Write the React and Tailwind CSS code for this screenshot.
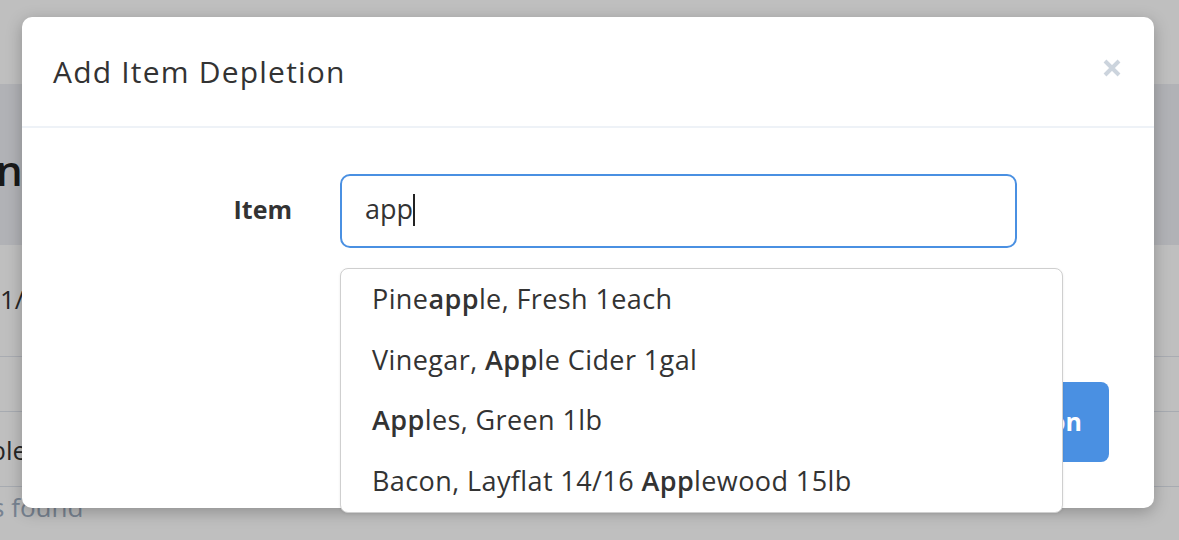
import React from 'react';

const font = { fontFamily: '"Open Sans", "Lato", sans-serif' };

// 검색 결과 목록: 일치 부분은 굵게
const results = [
  ['Pine', 'app', 'le, Fresh 1each'],
  ['Vinegar, ', 'App', 'le Cider 1gal'],
  ['', 'App', 'les, Green 1lb'],
  ['Bacon, Layflat 14/16 ', 'App', 'lewood 15lb'],
];

export default function App() {
  return (
    <div className="relative w-[1179px] h-[540px] overflow-hidden bg-white text-[#333]" style={font}>
      {/* 뒤쪽 페이지 */}
      <div className="flex flex-col">
        <div className="h-[84px]" />
        <div className="h-[161px] bg-[#eceef3] flex items-center">
          <span className="text-[42px] font-semibold text-[#222] -ml-[4px] mt-[10px]">n</span>
        </div>
        <div className="h-[112px] border-b border-[#e2e6ee] flex items-center">
          <span className="text-[26px] -mt-[2px]">1/</span>
        </div>
        <div className="h-[54px]" />
        <div className="h-[76px] border-y border-[#dfe4ec] flex items-center">
          <span className="text-[26px] -ml-[10px] mt-[2px]">ble</span>
        </div>
        <div className="text-[26px] text-[#a1afc2] -ml-[8px] mt-[1px]">s found</div>
      </div>

      {/* 오버레이 */}
      <div className="absolute inset-0 bg-black/25" />

      {/* 모달 */}
      <div className="absolute left-[22px] top-[17px] w-[1132px] h-[491px] bg-white rounded-[10px] shadow-[0_4px_16px_rgba(0,0,0,0.25)] flex flex-col">
        <div className="h-[111px] border-b-2 border-[#eef2f7] flex items-center justify-between pl-[31px] pr-[32px] shrink-0">
          <h2 className="text-[30px] tracking-[1.2px] text-[#333] -mt-[1px]">Add Item Depletion</h2>
          <svg width="20" height="20" viewBox="0 0 20 20" className="-mt-[8px]">
            <path d="M3 3 L17 17 M17 3 L3 17" stroke="#ccd4dd" strokeWidth="4" />
          </svg>
        </div>

        <div className="relative flex-1 pt-[46px]">
          <div className="flex items-center">
            <label className="w-[270px] text-right text-[25px] font-bold text-[#333] -mt-[2px]">Item</label>
            <div className="ml-[48px] w-[677px] h-[74px] border-2 border-[#4a90e2] rounded-[10px] flex items-center pl-[23px]">
              <span className="text-[27px] text-[#333] -mt-[4px]">app</span>
              <span className="w-[2px] h-[32px] bg-[#222] -mt-[2px]" />
            </div>
          </div>

          <div className="flex justify-end pr-[45px] mt-[134px]">
            <button className="h-[80px] px-[27px] bg-[#4a90e2] rounded-[8px] text-white text-[25px] font-bold">
              Add Depletion
            </button>
          </div>

          {/* 자동완성 목록 */}
          <div className="absolute left-[318px] top-[140px] w-[723px] h-[245px] bg-white border-[1.5px] border-[#cfcfcf] rounded-[8px] shadow-[0_1px_3px_rgba(0,0,0,0.08)] flex flex-col">
            {results.map(([a, b, c], i) => (
              <div key={i} className="h-[60.5px] flex items-center pl-[31px] text-[27px] tracking-[0.4px] text-[#333]">
                <span>
                  {a}
                  <strong className="font-semibold">{b}</strong>
                  {c}
                </span>
              </div>
            ))}
          </div>
        </div>
      </div>
    </div>
  );
}
